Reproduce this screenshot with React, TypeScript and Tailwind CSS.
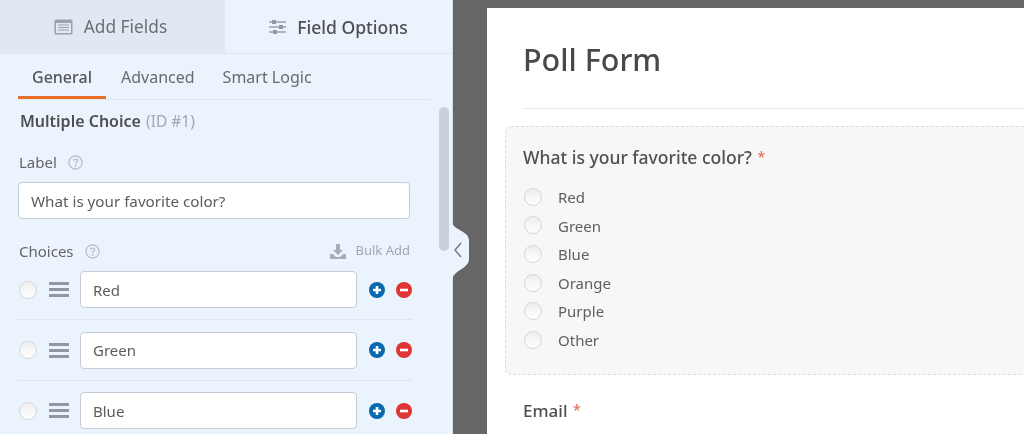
const font = { fontFamily: '"Noto Sans", "Open Sans", sans-serif' };

function Help() {
  return (
    <svg width="15" height="15" viewBox="0 0 16 16" fill="none" className="shrink-0">
      <circle cx="8" cy="8" r="7" stroke="#b4bcc6" strokeWidth="1.3" />
      <path d="M5.9 6.3C6 5 7 4.4 8.1 4.4c1.2 0 2.1.8 2.1 1.8 0 1.5-2.1 1.6-2.1 3.2" stroke="#b4bcc6" strokeWidth="1.3" fill="none" />
      <circle cx="8.1" cy="11.4" r=".9" fill="#b4bcc6" />
    </svg>
  );
}

function Radio() {
  return (
    <span className="block h-[18px] w-[18px] shrink-0 rounded-full border border-[#d3d7dc] bg-gradient-to-b from-[#eeeeee] to-white" />
  );
}

function Choice({ name, divider }: { name: string; divider: boolean }) {
  return (
    <div className={divider ? "mb-[11.5px] w-[394px] border-b border-[#dde5ee] pb-[11px]" : "w-[394px]"}>
      <div className="flex items-center">
        <div className="mr-[12px] ml-[1px] flex flex-col"><Radio /></div>
        <div className="mr-[11px] flex w-[20px] flex-col gap-[3px]">
          <span className="h-[3px] bg-[#8e98a6]" />
          <span className="h-[3px] bg-[#8e98a6]" />
          <span className="h-[3px] bg-[#8e98a6]" />
        </div>
        <div className="flex h-[37px] w-[277px] items-center rounded-[4px] border border-[#c3ccd7] bg-white pt-[1px] pl-[12px] text-[15px] text-[#5c5c5c]">
          {name}
        </div>
        <svg width="16" height="16" viewBox="0 0 16 16" className="ml-[12px]">
          <circle cx="8" cy="8" r="8" fill="#0968ae" />
          <path d="M8 4v8M4 8h8" stroke="#fff" strokeWidth="2.6" />
        </svg>
        <svg width="16" height="16" viewBox="0 0 16 16" className="ml-[11px]">
          <circle cx="8" cy="8" r="8" fill="#df3535" />
          <path d="M4 8h8" stroke="#fff" strokeWidth="2.6" />
        </svg>
      </div>
    </div>
  );
}

function Option({ name }: { name: string }) {
  return (
    <div className="flex h-[28.6px] items-center">
      <Radio />
      <span className="ml-[16px] pt-[1px] text-[15px] text-[#5f5f5f]">{name}</span>
    </div>
  );
}

export default function App() {
  return (
    <div className="flex h-[434px] w-[1024px] overflow-hidden bg-[#666666] blur-[0.4px]" style={font}>
      <aside className="relative flex w-[453px] shrink-0 flex-col overflow-hidden border-r border-[#d5dfea] bg-[#ebf3fc]">
        <div className="flex h-[54px] shrink-0 border-b border-[#dde5ee]">
          <div className="flex w-[225px] items-center justify-center gap-[11px] bg-[#e0e8f1] pt-[1px] pr-[4px] text-[17.3px] text-[#6a6f75]">
            <svg width="19" height="16" viewBox="0 0 19 16" fill="none">
              <rect x=".5" y=".5" width="18" height="15" rx="1.5" fill="#9aa2ac" />
              <rect x="2" y="4" width="15" height="10" fill="#e0e8f1" />
              <path d="M4 6h11M4 8.5h11M4 11h11" stroke="#9aa2ac" strokeWidth="1.2" />
            </svg>
            Add Fields
          </div>
          <div className="flex flex-1 items-center justify-center gap-[11px] pt-[1px] text-[17.5px] font-medium text-[#4f4f4f]">
            <svg width="17" height="16" viewBox="0 0 17 16" fill="none">
              <path d="M0 3h17M0 8h17M0 13h17" stroke="#9aa2ac" strokeWidth="1.3" />
              <rect x="3" y="1" width="4" height="4" fill="#8e98a6" />
              <rect x="10" y="6" width="4" height="4" fill="#8e98a6" />
              <rect x="4" y="11" width="4" height="4" fill="#8e98a6" />
            </svg>
            Field Options
          </div>
        </div>

        <div className="ml-[18px] flex h-[46px] w-[412px] shrink-0 items-start border-b border-[#dde5ee] text-[16px] text-[#6a6a6a]">
          <div className="flex h-[45px] w-[88px] items-center justify-center border-b-[3px] border-[#e8702a] pt-[3px] font-medium text-[#555]">General</div>
          <div className="flex h-[45px] items-center pl-[15px]">Advanced</div>
          <div className="flex h-[45px] items-center pl-[28px]">Smart Logic</div>
        </div>

        <div className="ml-[18px] flex w-[392px] flex-col">
          <div className="mt-[9px] h-[24px] pl-[2px] text-[16px] leading-[24px] font-semibold text-[#4f4f4f]">
            Multiple Choice <span className="ml-[1px] text-[15.5px] font-normal text-[#a2a8b0]">(ID #1)</span>
          </div>
          <div className="mt-[18px] flex h-[22px] items-center gap-[11px] pl-[1px] text-[15px] text-[#666]">Label <Help /></div>
          <div className="mt-[9px] flex h-[37px] items-center rounded-[4px] border border-[#c3ccd7] bg-white pt-[1px] pl-[12px] text-[15.2px] text-[#5c5c5c]">
            What is your favorite color?
          </div>
          <div className="mt-[21px] flex h-[22px] items-center pl-[1px] text-[15px] text-[#666]">
            <span className="mr-[11px]">Choices</span>
            <Help />
            <svg width="16" height="15" viewBox="0 0 16 15" className="mr-[10px] ml-auto" fill="#a7aeb7">
              <path d="M6 0h4v6h3L8 11 3 6h3zM0 10h3l3 3h4l3-3h3v5H0z" />
            </svg>
            <span className="text-[13px] text-[#a2a8b0]">Bulk Add</span>
          </div>
          <div className="mt-[9px] flex flex-col">
            <Choice name="Red" divider />
            <Choice name="Green" divider />
            <Choice name="Blue" divider={false} />
          </div>
        </div>

        <div className="absolute top-[107px] left-[439px] h-[144px] w-[10px] rounded-full bg-[#c8d0da]" />
      </aside>

      <svg width="18" height="58" viewBox="0 0 18 58" className="absolute top-[222px] left-[452px]">
        <path d="M0 0C1 8 17 9 17 18V37C17 47 1 48 0 58Z" fill="#ebf3fc" />
        <path d="M9 21l-6 7 6 7" stroke="#6f7780" strokeWidth="1.4" fill="none" />
      </svg>

      <main className="mt-[8px] ml-[34px] flex-1 bg-white pl-[18px]">
        <h1 className="ml-[18px] flex h-[101px] items-center border-b border-[#e8e8e8] pt-[4px] text-[30.5px] font-medium text-[#494949]">
          Poll Form
        </h1>
        <section className="mt-[17px] h-[249px] rounded-l-[6px] border border-r-0 border-dashed border-[#dedede] bg-[#f7f7f7] pt-[17px] pl-[18px]">
          <div className="-ml-[1px] h-[26px] text-[17.5px] leading-[26px] font-medium text-[#505050]">
            What is your favorite color? <span className="relative -top-[2px] ml-[1px] text-[14px] text-[#e2735c]">*</span>
          </div>
          <div className="mt-[12.5px] flex flex-col">
            {["Red", "Green", "Blue", "Orange", "Purple", "Other"].map((n) => (
              <Option key={n} name={n} />
            ))}
          </div>
        </section>
        <div className="mt-[23px] ml-[18px] text-[17px] font-medium text-[#505050]">
          Email <span className="relative -top-[2px] ml-[1px] text-[14px] text-[#e2735c]">*</span>
        </div>
      </main>
    </div>
  );
}
